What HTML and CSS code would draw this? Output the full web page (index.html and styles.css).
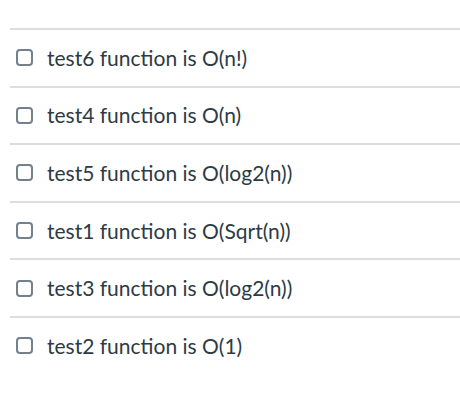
FILE: index.html
```html
<!DOCTYPE html>
<html>
<head>
<meta charset="utf-8">
<link rel="stylesheet" href="styles.css">
</head>
<body>
<div class="list">
  <label class="item"><span class="box"></span><span class="text">test6 function is O(n!)</span></label>
  <label class="item"><span class="box"></span><span class="text">test4 function is O(n)</span></label>
  <label class="item"><span class="box"></span><span class="text">test5 function is O(log2(n))</span></label>
  <label class="item"><span class="box"></span><span class="text">test1 function is O(Sqrt(n))</span></label>
  <label class="item"><span class="box"></span><span class="text">test3 function is O(log2(n))</span></label>
  <label class="item"><span class="box"></span><span class="text">test2 function is O(1)</span></label>
</div>
</body>
</html>
```
FILE: styles.css
```css
html, body {
  margin: 0;
  padding: 0;
  background: #ffffff;
}
body {
  font-family: Lato, "Liberation Sans", sans-serif;
  color: #2d3b45;
}
.list {
  padding-top: 28px;
  padding-left: 10px;
}
.item {
  display: flex;
  align-items: center;
  height: 55.6px;
  border-top: 2px solid #dddddd;
  padding-left: 6px;
  gap: 14px;
}
.box {
  width: 13px;
  height: 13px;
  border: 2px solid #73818c;
  border-radius: 4px;
  flex: none;
}
.text {
  font-size: 21px;
  line-height: 24px;
}
```
